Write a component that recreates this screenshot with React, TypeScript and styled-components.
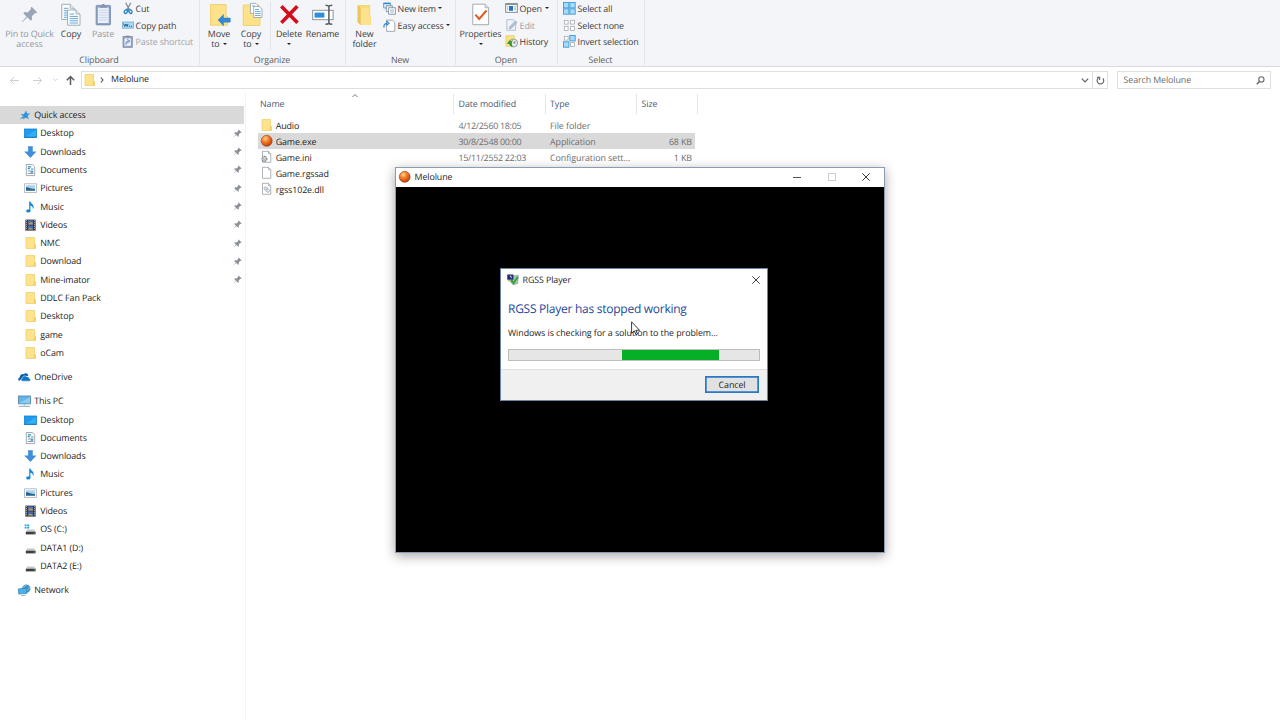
import React from 'react';
import styled, { createGlobalStyle } from 'styled-components';

const Global = createGlobalStyle`
  * { box-sizing: border-box; }
  html, body { margin: 0; padding: 0; background: #fff; overflow: hidden; }
  body {
    font-family: "Open Sans", "Noto Sans", sans-serif;
    font-size: 8.9px;
    letter-spacing: -0.1px;
    color: #1c1c1c;
    text-rendering: geometricPrecision;
  }
  svg { display: block; flex: none; overflow: visible; }
`;

/* ---------- Icons ---------- */

const Svg = styled.svg<{ $w: number; $h: number }>`
  width: ${p => p.$w}px;
  height: ${p => p.$h}px;
`;

const Folder = () => (
  <Svg $w={13} $h={12} viewBox="0 0 13 12">
    <path d="M2 .5h8.5v7h1v4H2z" fill="#fde48c" stroke="#eccb62" strokeWidth=".7" />
    <path d="M9.8 7.2h1.8v4.3H9.2z" fill="#f3d26c" />
  </Svg>
);
const Desktop = () => (
  <Svg $w={13} $h={12} viewBox="0 0 13 12">
    <rect x=".5" y="2" width="12" height="8.5" fill="#1b9cf0" stroke="#1583cf" strokeWidth=".8" />
    <path d="M1 10 12 3v7z" fill="#35aef8" />
    <path d="M.5 10.2h12" stroke="#1371b8" strokeWidth=".8" />
  </Svg>
);
const Download = () => (
  <Svg $w={13} $h={12} viewBox="0 0 13 12">
    <path d="M4.3.5h4.2v5.3h3.4L6.4 11.7.8 5.8h3.5z" fill="#3f8fdc" stroke="#2d78c2" strokeWidth=".4" />
  </Svg>
);
const Doc = () => (
  <Svg $w={13} $h={12} viewBox="0 0 13 12">
    <path d="M2.3.5h6l2.4 2.3v8.8H2.3z" fill="#fff" stroke="#8b959e" strokeWidth=".8" />
    <path d="M3.8 4.6h2M4 2.9h3.2M7 5h2.4" stroke="#2a8fc4" strokeWidth="1.1" />
    <path d="M3.8 7h5.6M3.8 9.5h5.6" stroke="#7a8d9d" strokeWidth=".9" />
    <path d="M6.6 7.2h2.6v1.6H6.6z" fill="#3d9dd0" />
  </Svg>
);
const Picture = () => (
  <Svg $w={13} $h={12} viewBox="0 0 13 12">
    <rect x=".6" y="1.8" width="11.8" height="8.6" fill="#fff" stroke="#a5b0ba" strokeWidth=".8" />
    <rect x="2" y="3.2" width="9" height="5.8" fill="#a9d5f2" />
    <path d="M2 5.2c3 .2 5 1.6 9 1.9V9H2z" fill="#2c5a7c" />
    <path d="M2 7.7h9V9H2z" fill="#4f86ae" />
  </Svg>
);
const Music = () => (
  <Svg $w={13} $h={12} viewBox="0 0 13 12">
    <ellipse cx="4.3" cy="9.9" rx="2.2" ry="1.7" fill="#1588d8" />
    <path d="M5.2.4h1.2c.2 2 3.7 2.8 3.3 6-.1.7-.4 1.2-.8 1.6.3-2-.9-3-2.5-3.3v5.2H5.2z" fill="#1588d8" />
  </Svg>
);
const Video = () => (
  <Svg $w={13} $h={12} viewBox="0 0 13 12">
    <rect x="1.4" y=".6" width="10.2" height="11" fill="#303238" />
    <path d="M2.5 1.2v10M10.5 1.2v10" stroke="#c9ccd2" strokeWidth=".9" strokeDasharray="1 1" />
    <rect x="3.8" y="1.3" width="5.4" height="4.3" fill="#4d6fae" />
    <rect x="3.8" y="6.4" width="5.4" height="4.3" fill="#3f68b0" />
    <path d="M4 5.4 6.4 3l2.6 1.6v.8zM4 10.5l2-2 3 1.4v.6z" fill="#c79a45" />
  </Svg>
);
const Star = () => (
  <Svg $w={13} $h={12} viewBox="0 0 13 12">
    <path d="M8.2 1.4 9 4.5l3.2.1-2.5 2.2 1 3.4-2.9-1.7L5 10.6l.4-3.4-2.9-1.7 3.5-.6z" fill="#2a95dd" />
    <path d="M1.8 10.5 4.6 7.6l1 .9z" fill="#2a7fb8" />
  </Svg>
);
const Cloud = () => (
  <Svg $w={13} $h={12} viewBox="0 0 13 12">
    <path d="M1.7 9.7C-.5 9.3.1 6.7 1.7 6.4 1.6 4 4 2.6 5.8 3.3 7 1.6 10 2 10.3 4.4L4.5 7z" fill="#0d62ab" />
    <path d="M4.6 10.2c-2-.3-1.9-2.8-.1-3.1.2-2.2 3.2-3 4.5-1.1 1.4-.5 2.6.5 2.5 1.7 1.6.2 1.6 2.4 0 2.5z" fill="#1176c8" stroke="#fff" strokeWidth=".5" />
  </Svg>
);
const Monitor = () => (
  <Svg $w={13} $h={12} viewBox="0 0 13 12">
    <rect x=".5" y="1" width="12" height="7.8" fill="#62b4e8" stroke="#5f8ba8" strokeWidth=".9" />
    <path d="M1 8.3 12 2v6.3z" fill="#8accf2" />
    <path d="M5.5 9.3h2v1h-2z" fill="#9db2c0" />
    <path d="M1 11.3h11" stroke="#8fa8b8" strokeWidth="1" />
  </Svg>
);
const Drive = ({ os }: { os?: boolean }) => (
  <Svg $w={13} $h={12} viewBox="0 0 13 12">
    {os && <path d="M.7 1.6h1.8v1.5H.7zM3.1 1.4h2.1v1.7H3.1zM.7 3.8h1.8v1.6H.7zM3.1 3.8h2.1v1.6H3.1z" fill="#12a9e2" />}
    <path d="M3.4 6.6h6.8l1.3 2.2H2z" fill="#c5c8ca" />
    <rect x="1.8" y="8.7" width="9.8" height="2.7" fill="#3b3f42" />
    <path d="M9.6 10.1h1.2" stroke="#7fd07f" strokeWidth=".7" />
  </Svg>
);
const Network = () => (
  <Svg $w={13} $h={12} viewBox="0 0 13 12">
    <circle cx="8.3" cy="4.6" r="4.2" fill="#4a92c4" />
    <path d="M5 3.2c2-.4 3-1.6 3.2-2.6M6.5 7c2-.3 4.6-2 5-3.6" stroke="#a8d6ee" strokeWidth=".8" fill="none" />
    <path d="m.4 4.9 8.2-.8.4 5.2-8.2.8z" fill="#48b4ec" stroke="#2d7dac" strokeWidth=".7" />
    <path d="m3.3 11.6 4.4-.4" stroke="#7fa9c2" strokeWidth=".9" />
  </Svg>
);
const PinShape = ({ color, size }: { color: string; size: number }) => (
  <Svg $w={size} $h={size} viewBox="0 0 16 16">
    <path d="M10 .8 15.3 6l-1.1.9-1-.2-3 3 .2 3.1-1.2 1.1L6 10.7 1 15.2l-.3-.3L5.2 10 2.2 6.9l1.1-1.2 3 .3 3.1-3.1-.3-1.1z" fill={color} />
  </Svg>
);
const Ball = () => (
  <Svg $w={12} $h={12} viewBox="0 0 12 12">
    <defs>
      <radialGradient id="ball" cx=".38" cy=".3" r=".75">
        <stop offset="0" stopColor="#ffd08a" />
        <stop offset=".4" stopColor="#f5812a" />
        <stop offset="1" stopColor="#b8380c" />
      </radialGradient>
    </defs>
    <circle cx="5.7" cy="5.8" r="5.5" fill="url(#ball)" stroke="#7c2a10" strokeWidth=".5" />
  </Svg>
);
const FileIcon = ({ kind }: { kind: 'ini' | 'blank' | 'dll' }) => (
  <Svg $w={12} $h={12} viewBox="0 0 12 12">
    <path d="M1.5.3h6L9.8 2.8v8.5H1.5z" fill="#fff" stroke="#8e9499" strokeWidth=".7" />
    <path d="M7.5.3v2.5h2.3" fill="none" stroke="#8e9499" strokeWidth=".6" />
    {kind === 'ini' && (
      <>
        <circle cx="3.4" cy="7.8" r="2.5" fill="#d6dade" stroke="#7b8288" strokeWidth="1.2" strokeDasharray="1.2 .6" />
        <circle cx="3.4" cy="7.8" r=".9" fill="#fff" stroke="#7b8288" strokeWidth=".5" />
      </>
    )}
    {kind === 'dll' && (
      <>
        <circle cx="4.6" cy="5.4" r="1.6" fill="#dfe5ea" stroke="#8796a4" strokeWidth=".9" strokeDasharray=".9 .4" />
        <circle cx="6.8" cy="7.6" r="1.7" fill="#dfe5ea" stroke="#8796a4" strokeWidth=".9" strokeDasharray=".9 .4" />
      </>
    )}
  </Svg>
);

const CopyIcon = () => (
  <Svg $w={20} $h={23} viewBox="0 0 20 23">
    {[[0.8, 1.3], [6.6, 7]].map(([x, y]) => (
      <g key={x} transform={`translate(${x} ${y})`}>
        <path d="M0 0h8.4L12.4 4v11.2H0z" fill="#fff" stroke="#8c9aa6" strokeWidth=".8" />
        <path d="M8.4 0v4h4" fill="#e8edf1" stroke="#8c9aa6" strokeWidth=".7" />
        <path d="M2 4h4.5M2 6.4h8.4M2 8.6h8.4M2 10.8h8.4M2 13h8.4" stroke="#4f9ad0" strokeWidth=".9" />
      </g>
    ))}
  </Svg>
);
const PasteIcon = () => (
  <Svg $w={16} $h={23} viewBox="0 0 16 23">
    <rect x="1.1" y="2.4" width="14.4" height="19.5" rx=".8" fill="#8fa3c4" stroke="#7388ad" strokeWidth=".8" />
    <rect x="2.9" y="4.6" width="10.8" height="15.4" fill="#eaf0f9" />
    <path d="M3.9 7.3h8.8M3.9 9.7h8.8M3.9 12.1h8.8M3.9 14.5h8.8M3.9 16.9h8.8" stroke="#c3d0e4" strokeWidth=".8" />
    <path d="M4.8 4.8V2.4h2C6.9.6 9.7.6 9.8 2.4h2v2.4z" fill="#8494ac" />
  </Svg>
);
const MoveIcon = () => (
  <Svg $w={21} $h={24} viewBox="0 0 21 24">
    <path d="M1.5 1.5h15.6v12h1.4v8.7h-17z" fill="#fde28a" stroke="#ecca62" strokeWidth=".8" />
    <path d="M9 17 14.5 11.4v3.6h6.8v4.2h-6.8v3.6z" fill="#3289d4" stroke="#2472b8" strokeWidth=".4" />
  </Svg>
);
const CopyToIcon = () => (
  <Svg $w={21} $h={24} viewBox="0 0 21 24">
    <path d="M2.2 2h15.6v12.5h1.2v8H2.2z" fill="#fde28a" stroke="#ecca62" strokeWidth=".8" />
    <path d="M9.5.4H15l2 2v8H9.5z" fill="#fff" stroke="#7f93a5" strokeWidth=".7" />
    <path d="M11 3h3" stroke="#4f9ad0" strokeWidth=".8" />
    <path d="M12.7 3.5h5.6L21 6v8.5h-8.3z" fill="#fff" stroke="#7f93a5" strokeWidth=".7" />
    <path d="M14 6.5h4M14 8.5h5.7M14 10.5h5.7M14 12.5h5.7" stroke="#4f9ad0" strokeWidth=".8" />
  </Svg>
);
const DeleteIcon = () => (
  <Svg $w={21} $h={21} viewBox="0 0 21 21">
    <path d="M2.3 2.2 18.5 18.8M18.3 2.2 2.4 18.8" stroke="#d20e1a" strokeWidth="3.6" />
  </Svg>
);
const RenameIcon = () => (
  <Svg $w={22} $h={22} viewBox="0 0 22 22">
    <rect x=".7" y="6.3" width="20.4" height="9.4" fill="#fff" stroke="#7d8a94" strokeWidth=".9" />
    <rect x="2.6" y="8.6" width="9.8" height="5" fill="#2f8cd8" />
    <path d="M13.5 1.2c2 0 3 .2 3.4 1.2.4-1 1.4-1.2 3.4-1.2M13.5 20.3c2 0 3-.2 3.4-1.2.4 1 1.4 1.2 3.4 1.2M16.9 2v17.5" stroke="#555c62" strokeWidth="1.5" fill="none" />
  </Svg>
);
const NewFolderIcon = () => (
  <Svg $w={17} $h={23} viewBox="0 0 17 23">
    <path d="M1.5 2h12.7v11.5h.9V22H4.4z" fill="#f7d876" />
    <path d="M1.5 2 4.8 4.6V22L1.5 19.6z" fill="#eac45c" />
    <path d="M4.8 4.6h8.4v9.2h1.4V22H4.8z" fill="#fde28e" />
  </Svg>
);
const PropertiesIcon = () => (
  <Svg $w={18} $h={23} viewBox="0 0 18 23">
    <path d="M.8 1.2h12.3l3.5 3.5v17H.8z" fill="#fff" stroke="#9aa1a7" strokeWidth=".9" />
    <path d="M13.1 1.2v3.5h3.5" fill="#e3e7ea" stroke="#9aa1a7" strokeWidth=".7" />
    <path d="m3.4 11.7 3.8 4.2 7.3-8.4" stroke="#e2591f" strokeWidth="2" fill="none" />
  </Svg>
);
const CutIcon = () => (
  <Svg $w={12} $h={13} viewBox="0 0 12 13">
    <path d="M3.7.7 7.9 8.8M8.8.7 4.5 8.8" stroke="#7d8790" strokeWidth="1.2" />
    <path d="M5 7 2.6 8.7c-1.2 1.5.2 3.3 1.6 2.6 1.2-.7 1-2.3 1.9-3.5.8 1.2.8 2.8 2 3.5 1.5.7 2.7-1.1 1.6-2.6L7.3 7" fill="none" stroke="#2580c8" strokeWidth="1.3" />
  </Svg>
);
const CopyPathIcon = () => (
  <Svg $w={12} $h={12} viewBox="0 0 12 12">
    <rect x=".5" y="3" width="11" height="6.2" fill="#a9daf7" stroke="#5fa7d6" strokeWidth=".7" />
    <path d="m1.6 4.6 1.2 2.9L4 5l1.2 2.5L6 5M7 7.3h1.2M9 7.3h1.2" stroke="#27506f" strokeWidth=".9" fill="none" />
  </Svg>
);
const PasteShortcutIcon = () => (
  <Svg $w={12} $h={13} viewBox="0 0 12 13">
    <rect x="1" y="1.5" width="9.3" height="10.8" fill="#8fa3c4" stroke="#7388ad" strokeWidth=".7" />
    <rect x="2.5" y="3.3" width="6.3" height="7.5" fill="#eef3fa" />
    <path d="M4 9.8c0-2.5.5-3.7 2-3.7M5.4 4.4l2.4 1.7-2.4 1.8" stroke="#5b74a0" strokeWidth="1" fill="none" />
    <path d="M3.8.6h3.7v2H3.8z" fill="#8494ac" />
  </Svg>
);
const NewItemIcon = () => (
  <Svg $w={13} $h={13} viewBox="0 0 13 13">
    <path d="M.6 1h6.8v5H.6z" fill="#d5ecfa" stroke="#4896cf" strokeWidth=".8" />
    <path d="M.6 1.5h6.8" stroke="#3586c4" strokeWidth="1.2" />
    <path d="M3.3 3.7h6v6h-6z" fill="#eef4f8" stroke="#738592" strokeWidth=".8" />
    <path d="M5.6 5.7h6.8v6.6H5.6z" fill="#fff" stroke="#738592" strokeWidth=".8" />
    <path d="M7 8h4M7 10h4" stroke="#7c9fbb" strokeWidth=".8" />
  </Svg>
);
const EasyAccessIcon = () => (
  <Svg $w={13} $h={13} viewBox="0 0 13 13">
    <path d="M3.6 1.2h5.8l2.4 2.3v8.8H3.6z" fill="#fff" stroke="#8b949b" strokeWidth=".8" />
    <path d="M1 8.5C.6 5.5 1.8 4.3 4.5 4.3M3.4 2l2.6 2.3L3.4 6.5" stroke="#2d86cc" strokeWidth="1.2" fill="none" />
  </Svg>
);
const OpenIcon = () => (
  <Svg $w={13} $h={12} viewBox="0 0 13 12">
    <rect x=".7" y="1.7" width="11.6" height="8.6" fill="#fff" stroke="#727e88" strokeWidth=".9" />
    <path d="M.7 2.3h11.6" stroke="#727e88" strokeWidth="1" />
    <rect x="4" y="4" width="4" height="4.8" fill="#2275c4" />
    <path d="M2 4.6h1.2M2 6.2h1.2M2 7.8h1.2M9.3 4.6H11M9.3 6.2H11M9.3 7.8H11" stroke="#8d98a1" strokeWidth=".8" />
  </Svg>
);
const EditIcon = () => (
  <Svg $w={13} $h={12} viewBox="0 0 13 12">
    <path d="M1.8.7h6.4l2.4 2.2v8.4H1.8z" fill="#eff3fa" stroke="#a7b4c8" strokeWidth=".8" />
    <path d="m4.3 9.8.4-2L10.4 2l1.6 1.5-5.7 5.8z" fill="#b6c3d9" stroke="#8c9dbb" strokeWidth=".6" />
  </Svg>
);
const HistoryIcon = () => (
  <Svg $w={13} $h={13} viewBox="0 0 13 13">
    <path d="M.8.7h8.4v10.6H.8z" fill="#fbdf80" stroke="#e8c559" strokeWidth=".6" />
    <circle cx="8.5" cy="8" r="4" fill="#e8ece9" stroke="#8b948d" strokeWidth=".9" />
    <path d="M8.5 8 10.4 6M8.5 8h1.8" stroke="#5c655e" strokeWidth=".8" fill="none" />
    <path d="M1.8 8.8 4.6 5l.8 1.6c1-1.1 1.9-1.5 3-1.6-1.9 1.6-2.1 3.9-.6 6.6-2-.1-3-1-3.3-2.6z" fill="#2e9c35" />
  </Svg>
);
const SelectIcon = ({ on }: { on: [boolean, boolean, boolean, boolean] }) => (
  <Svg $w={13} $h={13} viewBox="0 0 13 13">
    {on.map((sel, i) => {
      const x = (i % 2) * 6.3;
      const y = Math.floor(i / 2) * 6.3;
      return sel ? (
        <rect key={i} x={x + 0.5} y={y + 0.5} width="5.4" height="5.4" fill="#a5dcf9" stroke="#3d9ad6" strokeWidth=".9" />
      ) : (
        <rect key={i} x={x + 1.3} y={y + 1.3} width="3.8" height="3.8" fill="#fff" stroke="#a5abb0" strokeWidth=".8" />
      );
    })}
  </Svg>
);
const DialogIcon = () => (
  <Svg $w={12} $h={12} viewBox="0 0 12 12">
    <path d="M6 2 11.3 1.4l-.6 8-4.7 1.4-2.5-3z" fill="#a9cdb4" stroke="#77897f" strokeWidth=".6" />
    <path d="M.5.8h5.7v4.8H.5z" fill="#1d2b78" stroke="#4c5570" strokeWidth=".7" />
    <path d="m4 6 2.6 3 4.2-6" stroke="#37a043" strokeWidth="2" fill="none" />
    <path d="M3.2 1.8 4.6 3.8" stroke="#dfe3ee" strokeWidth="1.1" />
    <path d="M1 6.8h2.5" stroke="#b7a53c" strokeWidth="1" />
  </Svg>
);
const NavArrow = ({ dir, color }: { dir: 'left' | 'right' | 'up'; color: string }) => {
  const d = {
    left: 'M10 5.5H1.5M5 2 1.5 5.5 5 9',
    right: 'M1 5.5h8.5M6 2l3.5 3.5L6 9',
    up: 'M5.5 10V1.500M1.8 5.2l3.7-3.7 3.7 3.7',
  }[dir];
  return (
    <Svg $w={11} $h={11} viewBox="0 0 11 11">
      <path d={d} stroke={color} strokeWidth={dir === 'up' ? 1.5 : 1} fill="none" />
    </Svg>
  );
};
const Chevron = ({ w, h, d, color, sw = 1 }: { w: number; h: number; d: string; color: string; sw?: number }) => (
  <Svg $w={w} $h={h} viewBox={`0 0 ${w} ${h}`}>
    <path d={d} stroke={color} strokeWidth={sw} fill="none" />
  </Svg>
);
const Refresh = () => (
  <Svg $w={9} $h={9} viewBox="0 0 9 9">
    <path d="M2.3 2.1a3.3 3.3 0 1 0 4.6.3M1 1.3h2.6v2.7" stroke="#666" strokeWidth="1.2" fill="none" />
  </Svg>
);
const Magnifier = () => (
  <Svg $w={9} $h={9} viewBox="0 0 9 9">
    <circle cx="5.4" cy="3.4" r="2.6" stroke="#666" strokeWidth="1.1" fill="none" />
    <path d="M3.5 5.4.7 8.3" stroke="#666" strokeWidth="1.4" />
  </Svg>
);
const Cross = ({ size }: { size: number }) => (
  <Svg $w={size} $h={size} viewBox="0 0 8 8">
    <path d="m.3.3 7.4 7.4M7.7.3.3 7.7" stroke="#3a3a3a" strokeWidth="1" />
  </Svg>
);

/* ---------- Ribbon ---------- */

const Ribbon = styled.header`
  display: flex;
  height: 67px;
  background: #f4f5f8;
  border-bottom: 1px solid #d9dadc;
`;
const Group = styled.section<{ $w: number; $pad?: number }>`
  display: flex;
  flex-direction: column;
  width: ${p => p.$w}px;
  padding-left: ${p => p.$pad ?? 0}px;
  border-right: 1px solid #e3e4e7;
  height: 65px;
`;
const GroupBody = styled.div`
  display: flex;
  height: 53px;
`;
const GroupLabel = styled.div<{ $pad?: number }>`
  height: 12px;
  line-height: 13px;
  margin-left: ${p => -(p.$pad ?? 0) - 1}px;
  text-align: center;
  color: #5b5d61;
`;
const BigButton = styled.div<{ $w: number; $muted?: boolean }>`
  display: flex;
  flex-direction: column;
  align-items: center;
  width: ${p => p.$w}px;
  text-align: center;
  line-height: 10px;
  white-space: nowrap;
  color: ${p => (p.$muted ? '#93969b' : '#3a3c40')};
`;
const BigIcon = styled.div`
  display: flex;
  align-items: center;
  justify-content: center;
  height: 29px;
`;
const Caret = styled.i<{ $gap?: number }>`
  display: inline-block;
  margin-left: ${p => p.$gap ?? 0}px;
  border: 2px solid transparent;
  border-top: 2.5px solid #222;
  border-bottom: 0;
  vertical-align: 2px;
`;
const SmallColumn = styled.div<{ $ml: number }>`
  display: flex;
  flex-direction: column;
  margin-left: ${p => p.$ml}px;
`;
const SmallButton = styled.div<{ $muted?: boolean }>`
  display: flex;
  align-items: center;
  gap: 1.6px;
  height: 16.8px;
  white-space: nowrap;
  letter-spacing: -0.15px;
  color: ${p => (p.$muted ? '#a0a2a7' : '#3a3c40')};
`;
const SmallText = styled.span`
  margin-top: -0.4px;
`;
const InnerRule = styled.div<{ $m: string }>`
  width: 1px;
  height: 48px;
  margin: ${p => p.$m};
  background: #e3e4e7;
`;

/* ---------- Address row ---------- */

const AddressRow = styled.nav`
  display: flex;
  align-items: center;
  height: 26px;
  padding: 0 9px;
`;
const NavButtons = styled.div`
  display: flex;
  align-items: center;
  width: 72px;
`;
const NavSlot = styled.div<{ $ml?: number }>`
  margin-left: ${p => p.$ml ?? 0}px;
`;
const AddressBox = styled.div`
  display: flex;
  align-items: center;
  width: 1027px;
  height: 18px;
  padding-left: 1px;
  border: 1px solid #dfdfdf;
`;
const Crumb = styled.span`
  flex: 1;
  margin-left: 7px;
  margin-top: -3px;
`;
const RefreshSlot = styled.div`
  display: flex;
  align-items: center;
  justify-content: center;
  width: 15px;
  height: 16px;
  margin-left: 3px;
  border-left: 1px solid #dfdfdf;
`;
const SearchBox = styled.div`
  display: flex;
  align-items: center;
  justify-content: space-between;
  width: 154px;
  height: 18px;
  margin-left: 9px;
  padding: 0 5.5px;
  border: 1px solid #dfdfdf;
  color: #6b6b6b;
`;
const SearchText = styled.span`
  margin-top: -2px;
`;

/* ---------- Body ---------- */

const Body = styled.div`
  display: flex;
  height: 627px;
`;
const Sidebar = styled.aside`
  width: 246px;
  padding-top: 13px;
  border-right: 1px solid #f3f3f3;
`;
const SideItem = styled.div<{ $root?: boolean; $active?: boolean; $space?: boolean }>`
  display: flex;
  align-items: center;
  width: 244px;
  height: 18.29px;
  margin-top: ${p => (p.$space ? 6 : 0)}px;
  padding: 0 2px 0 ${p => (p.$root ? 18 : 24)}px;
  background: ${p => (p.$active ? '#d9d9d9' : 'transparent')};
`;
const SideLabel = styled.span`
  flex: 1;
  margin-left: 3.2px;
  margin-top: -1px;
`;
const Files = styled.main`
  display: flex;
  flex-direction: column;
  padding-left: 12px;
`;
const SortMark = styled.div`
  height: 4px;
  padding-left: 94px;
`;
const HeadRow = styled.div`
  display: flex;
  height: 17px;
  margin-bottom: 3px;
  color: #4c5a70;
`;
const HeadCell = styled.div<{ $w: number; $pad: number }>`
  width: ${p => p.$w}px;
  height: 20px;
  padding-left: ${p => p.$pad}px;
  border-right: 1px solid #e6e6e6;
  line-height: 19px;
  margin-top: -3px;
`;
const FileRow = styled.div<{ $active?: boolean }>`
  display: flex;
  align-items: center;
  width: 437px;
  height: 16px;
  padding-left: 3px;
  background: ${p => (p.$active ? '#d9d9d9' : 'transparent')};
  color: #6d6d6d;
`;
const FileIconSlot = styled.div<{ $shift: number }>`
  width: 12px;
  margin-left: ${p => p.$shift}px;
  margin-right: ${p => 2.7 - p.$shift}px;
`;
const FileName = styled.span`
  width: 182.8px;
  color: #1c1c1c;
`;
const FileDate = styled.span`
  width: 91.5px;
  letter-spacing: -0.28px;
`;
const FileType = styled.span`
  flex: 1;
  letter-spacing: -0.06px;
`;
const FileSize = styled.span`
  margin-right: 3px;
`;

/* ---------- Windows floating over the explorer ---------- */

const GameWindow = styled.section`
  position: absolute;
  left: 395px;
  top: 167px;
  width: 490px;
  height: 386px;
  display: flex;
  flex-direction: column;
  border: 1px solid #8b9bb0;
  background: #000;
  box-shadow: 0 3px 11px rgba(0, 0, 0, 0.35);
`;
const TitleBar = styled.div`
  display: flex;
  align-items: center;
  height: 19px;
  padding: 0 14px 1px 3px;
  background: #fff;
`;
const WindowTitle = styled.span`
  flex: 1;
  margin-left: 3.5px;
  margin-top: -1px;
`;
const WindowControls = styled.div`
  display: flex;
  align-items: center;
  gap: 26.5px;
`;
const Minimize = styled.div`
  width: 8px;
  height: 1px;
  background: #555;
`;
const Maximize = styled.div`
  width: 8px;
  height: 8px;
  border: 1px solid #cfcfcf;
`;
const Dialog = styled.section`
  position: absolute;
  left: 500px;
  top: 268px;
  width: 268px;
  height: 133px;
  display: flex;
  flex-direction: column;
  border: 1px solid #6d84a5;
  background: #fff;
`;
const DialogTitle = styled.div`
  display: flex;
  align-items: center;
  height: 22px;
  padding: 0 7.5px 0 6px;
`;
const DialogBody = styled.div`
  flex: 1;
  padding: 8px 7px 0;
`;
const Heading = styled.h1`
  margin: 0;
  height: 19px;
  font-size: 12px;
  font-weight: 400;
  letter-spacing: -0.26px;
  line-height: 19px;
  color: #24489a;
  white-space: nowrap;
`;
const Message = styled.p`
  margin: 7px 0 9px;
  height: 15px;
  line-height: 15px;
  letter-spacing: -0.07px;
  white-space: nowrap;
`;
const Track = styled.div`
  height: 12px;
  padding-left: 113px;
  border: 1px solid #bcbcbc;
  background: #e6e6e6;
`;
const Bar = styled.div`
  width: 97px;
  height: 10px;
  background: #06b025;
`;
const DialogFooter = styled.div`
  display: flex;
  justify-content: flex-end;
  height: 31px;
  padding: 6px 8px 0 0;
  border-top: 1px solid #dfdfdf;
  background: #f0f0f0;
`;
const CancelButton = styled.div`
  width: 54px;
  height: 17px;
  border: 1px solid #2878c8;
  box-shadow: inset 0 0 0 0.7px #2878c8;
  background: #e1e1e1;
  line-height: 15px;
  text-align: center;
`;
const Cursor = styled.div`
  position: absolute;
  left: 631px;
  top: 321px;
`;

const pinned: [React.FC, string, boolean][] = [
  [Desktop, 'Desktop', true],
  [Download, 'Downloads', true],
  [Doc, 'Documents', true],
  [Picture, 'Pictures', true],
  [Music, 'Music', true],
  [Video, 'Videos', true],
  [Folder, 'NMC', true],
  [Folder, 'Download', true],
  [Folder, 'Mine-imator', true],
  [Folder, 'DDLC Fan Pack', false],
  [Folder, 'Desktop', false],
  [Folder, 'game', false],
  [Folder, 'oCam', false],
];
const thisPc: [React.FC, string][] = [
  [Desktop, 'Desktop'],
  [Doc, 'Documents'],
  [Download, 'Downloads'],
  [Music, 'Music'],
  [Picture, 'Pictures'],
  [Video, 'Videos'],
  [() => <Drive os />, 'OS (C:)'],
  [() => <Drive />, 'DATA1 (D:)'],
  [() => <Drive />, 'DATA2 (E:)'],
];
const files = [
  { icon: <Folder />, shift: -1, name: 'Audio', date: '4/12/2560 18:05', type: 'File folder', size: '' },
  { icon: <Ball />, shift: 0, name: 'Game.exe', date: '30/8/2548 00:00', type: 'Application', size: '68 KB', active: true },
  { icon: <FileIcon kind="ini" />, shift: 0, name: 'Game.ini', date: '15/11/2552 22:03', type: 'Configuration sett...', size: '1 KB' },
  { icon: <FileIcon kind="blank" />, shift: 0, name: 'Game.rgssad', date: '', type: '', size: '' },
  { icon: <FileIcon kind="dll" />, shift: 0, name: 'rgss102e.dll', date: '', type: '', size: '' },
];

const Small = ({ icon, label, muted, caret }: { icon: React.ReactNode; label: string; muted?: boolean; caret?: number }) => (
  <SmallButton $muted={muted}>
    {icon}
    <SmallText>{label}</SmallText>
    {caret !== undefined && <Caret $gap={caret} />}
  </SmallButton>
);

export default function App() {
  return (
    <>
      <Global />
      <Ribbon>
        <Group $w={200}>
          <GroupBody>
            <BigButton $w={59} $muted>
              <BigIcon><PinShape color="#9aa5b8" size={17} /></BigIcon>
              Pin to Quick<br />access
            </BigButton>
            <BigButton $w={24}>
              <BigIcon><CopyIcon /></BigIcon>
              Copy
            </BigButton>
            <BigButton $w={40} $muted>
              <BigIcon><PasteIcon /></BigIcon>
              Paste
            </BigButton>
            <SmallColumn $ml={-1}>
              <Small icon={<CutIcon />} label="Cut" />
              <Small icon={<CopyPathIcon />} label="Copy path" />
              <Small icon={<PasteShortcutIcon />} label="Paste shortcut" muted />
            </SmallColumn>
          </GroupBody>
          <GroupLabel>Clipboard</GroupLabel>
        </Group>
        <Group $w={146} $pad={3}>
          <GroupBody>
            <BigButton $w={32}>
              <BigIcon><MoveIcon /></BigIcon>
              Move<br /><span>to <Caret $gap={1} /></span>
            </BigButton>
            <BigButton $w={32}>
              <BigIcon><CopyToIcon /></BigIcon>
              Copy<br /><span>to <Caret $gap={1} /></span>
            </BigButton>
            <InnerRule $m="2px 2px 0 3px" />
            <BigButton $w={32}>
              <BigIcon><DeleteIcon /></BigIcon>
              Delete<span><Caret /></span>
            </BigButton>
            <BigButton $w={35}>
              <BigIcon><RenameIcon /></BigIcon>
              Rename
            </BigButton>
          </GroupBody>
          <GroupLabel $pad={3}>Organize</GroupLabel>
        </Group>
        <Group $w={110} $pad={2}>
          <GroupBody>
            <BigButton $w={33}>
              <BigIcon><NewFolderIcon /></BigIcon>
              New<br />folder
            </BigButton>
            <SmallColumn $ml={2}>
              <Small icon={<NewItemIcon />} label="New item" caret={0.6} />
              <Small icon={<EasyAccessIcon />} label="Easy access" caret={0.6} />
            </SmallColumn>
          </GroupBody>
          <GroupLabel $pad={2}>New</GroupLabel>
        </Group>
        <Group $w={102} $pad={3}>
          <GroupBody>
            <BigButton $w={43}>
              <BigIcon><PropertiesIcon /></BigIcon>
              Properties<span><Caret /></span>
            </BigButton>
            <SmallColumn $ml={3}>
              <Small icon={<OpenIcon />} label="Open" caret={2} />
              <Small icon={<EditIcon />} label="Edit" muted />
              <Small icon={<HistoryIcon />} label="History" />
            </SmallColumn>
          </GroupBody>
          <GroupLabel $pad={3}>Open</GroupLabel>
        </Group>
        <Group $w={87} $pad={5}>
          <GroupBody>
            <SmallColumn $ml={0}>
              <Small icon={<SelectIcon on={[true, true, true, true]} />} label="Select all" />
              <Small icon={<SelectIcon on={[false, false, false, false]} />} label="Select none" />
              <Small icon={<SelectIcon on={[false, true, true, false]} />} label="Invert selection" />
            </SmallColumn>
          </GroupBody>
          <GroupLabel $pad={5}>Select</GroupLabel>
        </Group>
      </Ribbon>

      <AddressRow>
        <NavButtons>
          <NavSlot><NavArrow dir="left" color="#cfcfcf" /></NavSlot>
          <NavSlot $ml={12}><NavArrow dir="right" color="#cfcfcf" /></NavSlot>
          <NavSlot $ml={10}><Chevron w={5} h={4} d="M.5.8 2.5 2.8 4.5.8" color="#cfcfcf" /></NavSlot>
          <NavSlot $ml={7}><NavArrow dir="up" color="#5c5c5c" /></NavSlot>
        </NavButtons>
        <AddressBox>
          <Folder />
          <NavSlot $ml={4}><Chevron w={4} h={6} d="M.8.6 3 3 .8 5.4" color="#555" sw={1.1} /></NavSlot>
          <Crumb>Melolune</Crumb>
          <Chevron w={8} h={5} d="M.8.6 4 3.9 7.2.6" color="#666" sw={1.3} />
          <RefreshSlot><Refresh /></RefreshSlot>
        </AddressBox>
        <SearchBox>
          <SearchText>Search Melolune</SearchText>
          <Magnifier />
        </SearchBox>
      </AddressRow>

      <Body>
        <Sidebar>
          <SideItem $root $active><Star /><SideLabel>Quick access</SideLabel></SideItem>
          {pinned.map(([Icon, label, pin], i) => (
            <SideItem key={i}>
              <Icon />
              <SideLabel>{label}</SideLabel>
              {pin && <PinShape color="#8a9097" size={9} />}
            </SideItem>
          ))}
          <SideItem $root $space><Cloud /><SideLabel>OneDrive</SideLabel></SideItem>
          <SideItem $root $space><Monitor /><SideLabel>This PC</SideLabel></SideItem>
          {thisPc.map(([Icon, label]) => (
            <SideItem key={label}>
              <Icon />
              <SideLabel>{label}</SideLabel>
            </SideItem>
          ))}
          <SideItem $root $space><Network /><SideLabel>Network</SideLabel></SideItem>
        </Sidebar>
        <Files>
          <SortMark><Chevron w={6} h={4} d="M.5 4 3 1.5l2.5 2.5" color="#666" sw={0.9} /></SortMark>
          <HeadRow>
            <HeadCell $w={196} $pad={2}>Name</HeadCell>
            <HeadCell $w={92} $pad={4.6}>Date modified</HeadCell>
            <HeadCell $w={91} $pad={4}>Type</HeadCell>
            <HeadCell $w={61} $pad={4.5}>Size</HeadCell>
          </HeadRow>
          {files.map(f => (
            <FileRow key={f.name} $active={f.active}>
              <FileIconSlot $shift={f.shift}>{f.icon}</FileIconSlot>
              <FileName>{f.name}</FileName>
              <FileDate>{f.date}</FileDate>
              <FileType>{f.type}</FileType>
              <FileSize>{f.size}</FileSize>
            </FileRow>
          ))}
        </Files>
      </Body>

      <GameWindow>
        <TitleBar>
          <Ball />
          <WindowTitle>Melolune</WindowTitle>
          <WindowControls>
            <Minimize />
            <Maximize />
            <Cross size={8} />
          </WindowControls>
        </TitleBar>
      </GameWindow>

      <Dialog>
        <DialogTitle>
          <DialogIcon />
          <WindowTitle>RGSS Player</WindowTitle>
          <Cross size={8} />
        </DialogTitle>
        <DialogBody>
          <Heading>RGSS Player has stopped working</Heading>
          <Message>Windows is checking for a solution to the problem...</Message>
          <Track><Bar /></Track>
        </DialogBody>
        <DialogFooter>
          <CancelButton>Cancel</CancelButton>
        </DialogFooter>
      </Dialog>

      <Cursor>
        <Svg $w={9} $h={14} viewBox="0 0 9 14">
          <path d="M.6.8v11.5l2.7-2.5L5 13.6l1.5-.7-1.7-3.6h3.8z" fill="#fff" stroke="#222" strokeWidth=".9" />
        </Svg>
      </Cursor>
    </>
  );
}
